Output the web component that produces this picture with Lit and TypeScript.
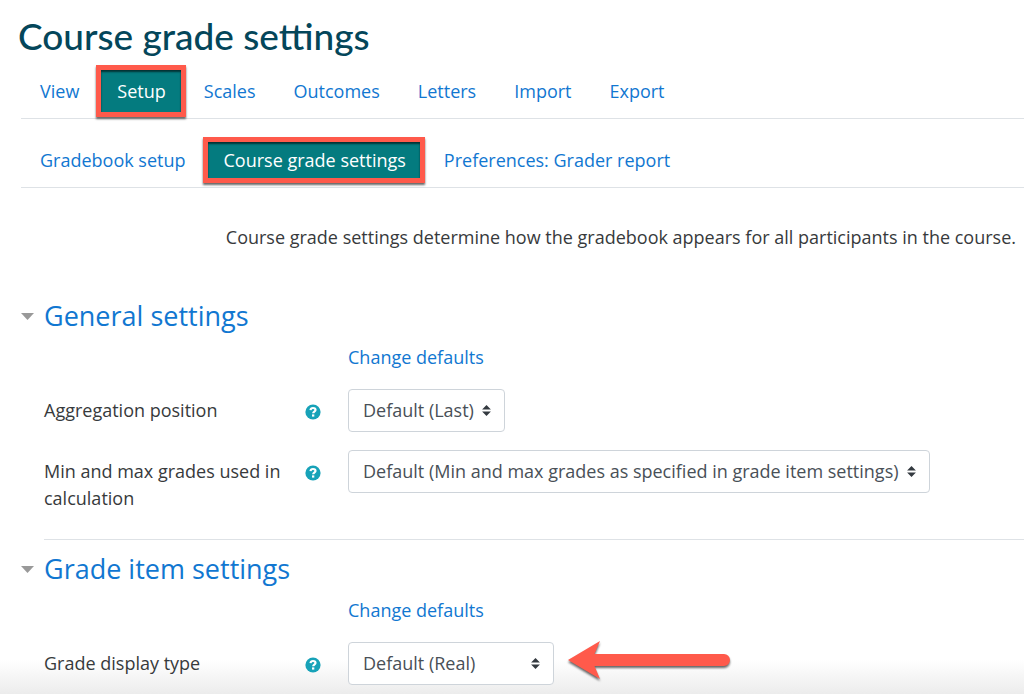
import { LitElement, html, css, svg, nothing } from "lit";
import { customElement, property } from "lit/decorators.js";

interface Setting {
  id: string;
  label: string;
  value: string;
  wide?: boolean;
  marked?: boolean;
}

@customElement("tab-bar")
class TabBar extends LitElement {
  @property({ attribute: false }) items: string[] = [];
  @property() active = "";
  @property() label = "";

  static styles = css`
    :host { display: block; }
    .bar {
      display: flex;
      border-bottom: 1px solid #dee2e6;
      padding-bottom: 6px;
    }
    .tab {
      padding: 0 19px;
      line-height: 42px;
      color: #1177d1;
      text-decoration: none;
      white-space: nowrap;
    }
    .active {
      position: relative;
      background: #047b7f;
      color: #fff;
    }
    .active::after {
      content: "";
      position: absolute;
      inset: var(--frame-inset, -5px -1px -5px -2px);
      border: 5px solid #ff5a4b;
      box-shadow: 0 2px 2px rgba(0, 0, 0, 0.6), inset 0 2px 2px rgba(0, 0, 0, 0.6);
    }
  `;

  render() {
    return html`<nav class="bar" aria-label=${this.label}>
      ${this.items.map(
        (t) => html`<a href="#" class="tab ${t === this.active ? "active" : ""}"
          aria-current=${t === this.active ? "page" : nothing}>${t}</a>`
      )}
    </nav>`;
  }
}

@customElement("settings-section")
class SettingsSection extends LitElement {
  @property() heading = "";
  @property({ attribute: false }) settings: Setting[] = [];

  static styles = css`
    :host { display: block; }
    .head { display: flex; align-items: center; }
    .toggle {
      width: 23px;
      height: 36px;
      padding: 0;
      border: 0;
      background: none;
      display: flex;
      align-items: center;
    }
    .toggle svg { display: block; }
    h2 { margin: 0; font-size: 27px; font-weight: 400; line-height: 36px; }
    a { color: #1177d1; text-decoration: none; }
    .body {
      margin: 10px 0 0 23px;
      display: grid;
      gap: 18px;
      padding-bottom: 27px;
      border-bottom: 1px solid #dee2e6;
    }
    .row {
      display: grid;
      grid-template-columns: 240px 64px 1fr;
      align-items: start;
    }
    .defaults { grid-column: 3; }
    label { padding-top: 8px; }
    .help {
      margin: 15px 0 0 21px;
      width: 16px;
      height: 16px;
      padding: 0;
      border: 0;
      background: none;
    }
    .help svg { display: block; }
    .field { display: flex; gap: 13px; align-items: flex-start; }
    select {
      appearance: none;
      height: 43px;
      padding: 0 30px 0 14px;
      border: 1px solid #ced4da;
      border-radius: 4px;
      font: inherit;
      color: #495057;
      background: #fff
        url("data:image/svg+xml,%3Csvg xmlns='http://www.w3.org/2000/svg' viewBox='0 0 4 5'%3E%3Cpath fill='%23343a40' d='M2 0L0 2h4zm0 5L0 3h4z'/%3E%3C/svg%3E")
        no-repeat right 13px center / 9px 11px;
    }
    .wide { min-width: 206px; }
    .arrow { overflow: visible; filter: drop-shadow(0 2px 1px rgba(0, 0, 0, 0.6)); }
  `;

  private helpIcon = svg`<svg width="16" height="16" viewBox="0 0 16 16" aria-hidden="true">
    <circle cx="8" cy="8" r="7.6" fill="#17a2b8"/>
    <path d="M5.5 6.1C5.7 4.5 6.7 4 8 4c1.500 0 2.500.8 2.500 2 0 1.700-2.300 1.700-2.300 3.300" fill="none" stroke="#fff" stroke-width="2.200"/>
    <rect x="7" y="10.400" width="2.300" height="2.200" fill="#fff"/>
  </svg>`;

  render() {
    return html`
      <div class="head">
        <button class="toggle" aria-label="Collapse ${this.heading}">
          <svg width="13" height="7" viewBox="0 0 13 7"><path d="M0 0h13L6.5 7z" fill="#999"/></svg>
        </button>
        <h2><a href="#">${this.heading}</a></h2>
      </div>
      <div class="body">
        <div class="row"><a class="defaults" href="#">Change defaults</a></div>
        ${this.settings.map(
          (s) => html`<div class="row">
            <label for=${s.id}>${s.label}</label>
            <button class="help" aria-label="Help with ${s.label}">${this.helpIcon}</button>
            <div class="field">
              <select id=${s.id} class=${s.wide ? "wide" : ""}><option>${s.value}</option></select>
              ${s.marked
                ? html`<svg class="arrow" width="164" height="38" viewBox="0 0 164 38" aria-hidden="true">
                    <path d="M1 18L33 -1L27.500 12H157a6 6 0 0 1 0 12H27.500L33 37Z" fill="#ff5a4b"/>
                  </svg>`
                : nothing}
            </div>
          </div>`
        )}
      </div>`;
  }
}

@customElement("app-root")
class AppRoot extends LitElement {
  static styles = css`
    :host {
      display: block;
      box-sizing: border-box;
      height: 100vh;
      overflow: hidden;
      padding: 14px 0 0 21px;
      font: 18px/27px "Open Sans", "Noto Sans", sans-serif;
      color: #373a3c;
      background: linear-gradient(to top, #ececec, #fff 34px);
    }
    h1 {
      margin: 0 0 12px -3px;
      font-family: "Lato", "Open Sans", sans-serif;
      font-size: 37px;
      font-weight: 500;
      line-height: 44px;
      color: #04465a;
    }
    .sub { margin-top: 20px; --frame-inset: -2px 0 -2px -2px; }
    .intro { margin: 36px 8px 47px 0; text-align: right; }
    .next { margin-top: 11px; }
  `;

  render() {
    return html`
      <h1>Course grade settings</h1>
      <tab-bar label="Gradebook" active="Setup"
        .items=${["View", "Setup", "Scales", "Outcomes", "Letters", "Import", "Export"]}></tab-bar>
      <tab-bar class="sub" label="Setup" active="Course grade settings"
        .items=${["Gradebook setup", "Course grade settings", "Preferences: Grader report"]}></tab-bar>
      <p class="intro">Course grade settings determine how the gradebook appears for all participants in the course.</p>
      <settings-section heading="General settings" .settings=${[
        { id: "position", label: "Aggregation position", value: "Default (Last)" },
        { id: "minmax", label: "Min and max grades used in calculation", value: "Default (Min and max grades as specified in grade item settings)" },
      ]}></settings-section>
      <settings-section class="next" heading="Grade item settings" .settings=${[
        { id: "display", label: "Grade display type", value: "Default (Real)", wide: true, marked: true },
      ]}></settings-section>
    `;
  }
}
